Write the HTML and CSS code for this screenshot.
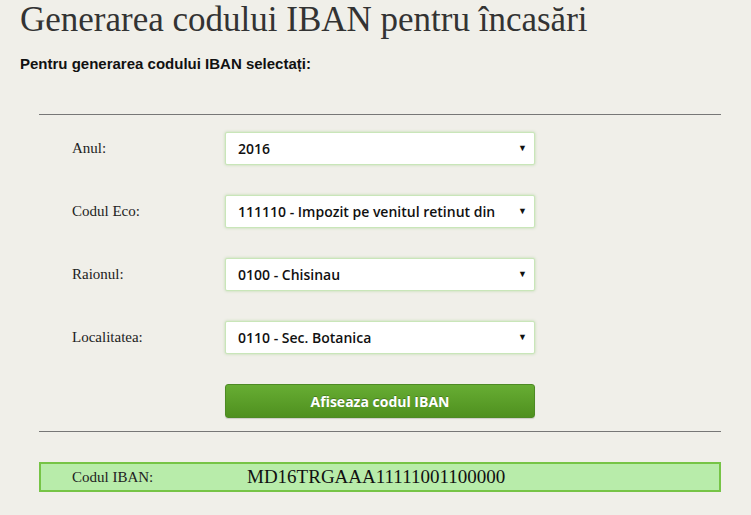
FILE: index.html
```html
<!DOCTYPE html>
<html lang="ro">
<head>
<meta charset="utf-8">
<title>Generarea codului IBAN</title>
<link rel="stylesheet" href="styles.css">
</head>
<body>
<h1 class="title">Generarea codului IBAN pentru încasări</h1>
<p class="intro">Pentru generarea codului IBAN selectați:</p>
<div class="panel">
  <div class="form">
    <div class="row">
      <label class="label">Anul:</label>
      <div class="field"><select class="select"><option>2016</option></select><span class="arrow">▼</span></div>
    </div>
    <div class="row">
      <label class="label">Codul Eco:</label>
      <div class="field"><select class="select"><option>111110 - Impozit pe venitul retinut din salariu</option></select><span class="arrow">▼</span></div>
    </div>
    <div class="row">
      <label class="label">Raionul:</label>
      <div class="field"><select class="select"><option>0100 - Chisinau</option></select><span class="arrow">▼</span></div>
    </div>
    <div class="row">
      <label class="label">Localitatea:</label>
      <div class="field"><select class="select"><option>0110 - Sec. Botanica</option></select><span class="arrow">▼</span></div>
    </div>
    <div class="row row-btn">
      <span class="label"></span>
      <button class="btn" type="button">Afiseaza codul IBAN</button>
    </div>
  </div>
  <div class="result">
    <span class="label res-label">Codul IBAN:</span>
    <span class="iban">MD16TRGAAA11111001100000</span>
  </div>
</div>
</body>
</html>
```
FILE: styles.css
```css
html, body {
  margin: 0;
  padding: 0;
  background: #f0efe9;
}
body {
  font-family: "Liberation Serif", serif;
  color: #222;
}
.title {
  margin: 0;
  padding: 0 0 0 20px;
  font-family: "Liberation Serif", serif;
  font-weight: normal;
  font-size: 35px;
  line-height: 40px;
  color: #333;
}
.intro {
  margin: 16px 0 0 20px;
  font-family: "Liberation Sans", sans-serif;
  font-weight: bold;
  font-size: 15px;
  line-height: 16px;
  color: #111;
}
.panel {
  margin: 42px 30px 0 39px;
}
.form {
  border-top: 1px solid #777;
  border-bottom: 1px solid #777;
  padding: 17px 0 13px 0;
}
.row {
  display: flex;
  align-items: center;
  height: 33px;
  margin-bottom: 30px;
}
.row-btn {
  height: 34px;
  margin-top: 1px;
  margin-bottom: 0;
}
.label {
  display: block;
  flex: none;
  width: 186px;
  padding-left: 33px;
  box-sizing: border-box;
  font-family: "Liberation Serif", serif;
  font-size: 15px;
  color: #222;
}
.field {
  position: relative;
  flex: none;
  width: 310px;
  height: 33px;
}
.select {
  -webkit-appearance: none;
  appearance: none;
  width: 100%;
  height: 100%;
  box-sizing: border-box;
  border: 1px solid #c9e6b9;
  border-radius: 2px;
  box-shadow: 0 0 3px rgba(120, 190, 90, 0.45);
  background: #fff;
  padding: 0 35px 0 12px;
  font-family: "Open Sans", sans-serif;
  font-weight: 600;
  font-size: 14px;
  color: #111;
  outline: none;
}
.arrow {
  position: absolute;
  right: 8px;
  top: 10px;
  font-size: 9px;
  line-height: 12px;
  color: #111;
  pointer-events: none;
}
.btn {
  flex: none;
  width: 310px;
  height: 34px;
  box-sizing: border-box;
  border: 1px solid #4d8a24;
  border-radius: 3px;
  background: linear-gradient(#67ad33, #4f901f);
  color: #fff;
  font-family: "Open Sans", sans-serif;
  font-weight: bold;
  font-size: 14px;
  text-shadow: 0 -1px 0 rgba(0,0,0,0.25);
  box-shadow: 0 1px 1px rgba(0,0,0,0.15);
}
.result {
  display: flex;
  align-items: center;
  margin-top: 30px;
  height: 30px;
  box-sizing: border-box;
  background: #b8ecaa;
  border: 2px solid #76c446;
}
.res-label {
  width: 206px;
  padding-left: 31px;
}
.iban {
  font-family: "Liberation Serif", serif;
  font-size: 19px;
  color: #111;
}
```
